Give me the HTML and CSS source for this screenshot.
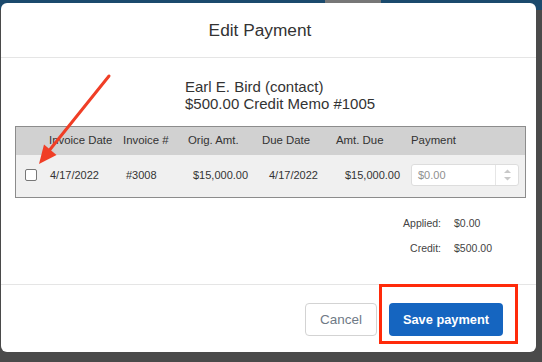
FILE: index.html
```html
<!DOCTYPE html>
<html>
<head>
    <title>Edit Payment</title>
    <link rel="stylesheet" href="styles.css">
</head>
<body>
    <div class="topbar"><span class="topbar-tab"></span></div>
    <div class="modal">
        <div class="modal-header">
            <h2>Edit Payment</h2>
        </div>
        <div class="modal-body">
            <div class="contact">
                <div>Earl E. Bird (contact)</div>
                <div>$500.00 Credit Memo #1005</div>
            </div>
            <div class="invoices">
                <div class="row head">
                    <span></span>
                    <span>Invoice Date</span>
                    <span>Invoice #</span>
                    <span>Orig. Amt.</span>
                    <span>Due Date</span>
                    <span>Amt. Due</span>
                    <span>Payment</span>
                </div>
                <div class="row item">
                    <span class="c0"><input type="checkbox" class="check"></span>
                    <span class="c1">4/17/2022</span>
                    <span class="c2">#3008</span>
                    <span class="c3">$15,000.00</span>
                    <span class="c4">4/17/2022</span>
                    <span class="c5">$15,000.00</span>
                    <span class="c6">
                        <span class="amount">
                            <span class="amount-text">$0.00</span>
                            <span class="spinner">
                                <svg width="9" height="14" viewBox="0 0 9 14">
                                    <path d="M1 5 L4.5 1.5 L8 5 Z" fill="#c8c8c8"/>
                                    <path d="M1 9 L4.5 12.5 L8 9 Z" fill="#c8c8c8"/>
                                </svg>
                            </span>
                        </span>
                    </span>
                </div>
            </div>
            <div class="summary">
                <span class="label">Applied:</span><span>$0.00</span>
                <span class="label">Credit:</span><span>$500.00</span>
            </div>
        </div>
        <div class="modal-footer">
            <button class="btn btn-cancel">Cancel</button>
            <button class="btn btn-save">Save payment</button>
        </div>
    </div>

    <!-- annotations drawn over the screenshot -->
    <svg class="arrow" width="542" height="362" viewBox="0 0 542 362">
        <line x1="109" y1="76" x2="48" y2="152" stroke="#f03e26" stroke-width="3" stroke-linecap="round"/>
        <polygon points="39,164 44,144.5 56.5,155" fill="#f03e26"/>
    </svg>
    <div class="highlight"></div>
</body>
</html>
```

FILE: styles.css
```css
body {
    margin: 0;
    height: 362px;
    overflow: hidden;
    font-family: "Liberation Sans", Arial, sans-serif;
    background: linear-gradient(#1b4a6d 0, #1b4a6d 10px, #4a4a4a 10px);
    position: relative;
}

.topbar {
    height: 4px;
    position: absolute;
    top: 0;
    left: 0;
    right: 0;
}

.topbar-tab {
    position: absolute;
    left: 325px;
    width: 56px;
    height: 4px;
    background: #777;
}

.modal {
    position: relative;
    margin: 3px 0 0 1px;
    width: 535px;
    height: 349px;
    background: #fff;
    border-radius: 6px;
    display: flex;
    flex-direction: column;
    color: #333;
}

.modal-header {
    height: 54px;
    border-bottom: 1px solid #e5e5e5;
    display: flex;
    align-items: center;
    justify-content: center;
    padding-right: 17px;
}

.modal-header h2 {
    margin: 0;
    font-size: 17.3px;
    font-weight: normal;
    color: #333;
}

.modal-body {
    height: 226px;
    padding-top: 20px;
    box-sizing: border-box;
}

.contact {
    padding-left: 184px;
    font-size: 15px;
    line-height: 17px;
    color: #333;
}

.invoices {
    margin: 14px 0 0 14px;
    width: 509px;
    border: 1px solid #8c8c8c;
    font-size: 11px;
    color: #333;
}

.row {
    display: grid;
    grid-template-columns: 33px 74px 65px 74px 74px 75px 114px;
    align-items: center;
}

.row.head {
    height: 28px;
    background: #d1d1d1;
    font-size: 11.4px;
    padding-bottom: 2px;
    box-sizing: border-box;
}

.row.item {
    height: 42px;
    background: #f0f0f0;
    padding-bottom: 3px;
    box-sizing: border-box;
}

.c0 { padding-left: 9px; display: flex; }
.c1 { padding-left: 1px; }
.c2 { padding-left: 3px; }
.c3 { padding-left: 5px; }
.c4 { padding-left: 7px; }
.c5 { padding-left: 9px; }

.check {
    appearance: none;
    margin: 0;
    width: 12px;
    height: 12px;
    border: 1px solid #777;
    border-radius: 2px;
    background: #fff;
}

.amount {
    display: flex;
    width: 108px;
    height: 22px;
    border: 1px solid #ddd;
    border-radius: 3px;
    background: #fff;
    box-sizing: border-box;
    align-items: center;
}

.amount-text {
    flex: 1;
    padding-left: 6px;
    color: #8f8f8f;
    font-size: 11px;
}

.spinner {
    width: 22px;
    height: 100%;
    border-left: 1px solid #e6e6e6;
    display: flex;
    align-items: center;
    justify-content: center;
}

.summary {
    display: grid;
    grid-template-columns: auto auto;
    justify-content: end;
    column-gap: 13px;
    margin-top: 13px;
    padding-right: 44px;
    font-size: 10.5px;
    line-height: 25px;
    color: #444;
}

.summary .label {
    text-align: right;
}

.modal-footer {
    flex: 1;
    border-top: 1px solid #e5e5e5;
    display: flex;
    justify-content: flex-end;
    align-items: flex-start;
    gap: 12px;
    padding: 18px 33px 0 0;
}

.btn {
    height: 33px;
    border-radius: 4px;
    font-family: "Liberation Sans", Arial, sans-serif;
    cursor: pointer;
}

.btn-cancel {
    width: 72px;
    background: #fff;
    border: 1px solid #d3d3d3;
    color: #6f7a86;
    font-size: 13.5px;
}

.btn-save {
    width: 114px;
    background: #1565c0;
    border: none;
    color: #fff;
    font-size: 12.8px;
    font-weight: bold;
}

.arrow {
    position: absolute;
    top: 0;
    left: 0;
    pointer-events: none;
}

.highlight {
    position: absolute;
    left: 379px;
    top: 284px;
    width: 133px;
    height: 54px;
    border: 3px solid #ff2a0a;
}
```
